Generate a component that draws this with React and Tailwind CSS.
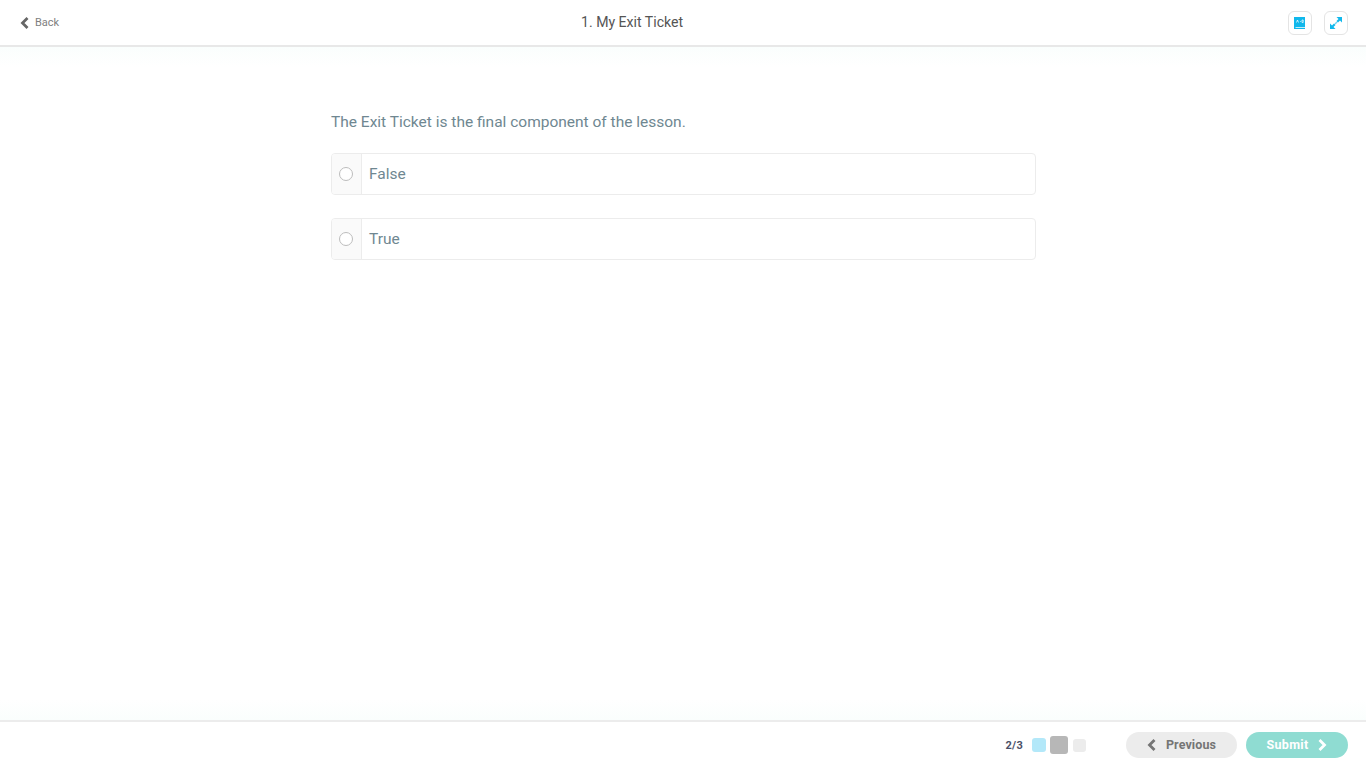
import React from 'react';

const options = ['False', 'True'];

const Chevron = ({ dir = 'left', className }) => (
  <svg width="9" height="12" viewBox="0 0 9 12" className={className} fill="none" stroke="currentColor" strokeWidth="2.8">
    <path d={dir === 'left' ? 'M7.5 1 2.500 6l5 5' : 'M1.500 1l5 5-5 5'} />
  </svg>
);

const Option = ({ label }) => (
  <label className="flex h-[42px] rounded-[4px] border border-[#ececec] bg-white cursor-pointer overflow-hidden">
    <span className="flex w-[30px] shrink-0 items-center justify-center border-r border-[#ececec] bg-[#fafafa] pr-[1px]">
      <span className="w-[14px] h-[14px] rounded-full border-[1.5px] border-[#bdbdbd] bg-white" />
    </span>
    <span className="flex items-center pl-[7px] pt-[2px] text-[15.5px] text-[#6f8791]">{label}</span>
  </label>
);

const App = () => {
  return (
    <div className="flex h-screen flex-col bg-white font-['Roboto',sans-serif]">
      {/* Header */}
      <header className="relative flex h-[47px] shrink-0 items-center justify-between border-b-2 border-[#e8e8e8] pl-[20px] pr-[18px] bg-white">
        <button className="flex items-center gap-[6px] text-[11px] text-[#808080]">
          <Chevron className="text-[#666]" />
          <span className="pt-[1px]">Back</span>
        </button>
        <h1 className="absolute left-[581px] text-[14.1px] text-[#555]">1. My Exit Ticket</h1>
        <div className="flex gap-[12px]">
          <button className="flex h-[24px] w-[24px] items-center justify-center rounded-[6px] border border-[#e4e4e4]">
            <svg width="11" height="12" viewBox="0 0 11 12" className="mr-[1px]">
              <path d="M0 0h11v10H1.500v.8H11V12H0z" fill="#10b8ec" />
              <path d="M2.500 5.500 3.500 3l1 2.500M6 4.500h.8M8 3h1.200v2.500H8z" stroke="#fff" strokeWidth=".7" fill="none" />
            </svg>
          </button>
          <button className="flex h-[24px] w-[24px] items-center justify-center rounded-[6px] border border-[#e4e4e4]">
            <svg width="12" height="12" viewBox="0 0 12 12" fill="#10b8ec">
              <path d="M6.500 0H12v5.500L10 3.500 8 5.500 6.500 4 8.500 2z" />
              <path d="M5.500 12H0V6.500L2 8.500 4 6.500 5.500 8 3.500 10z" />
              <path d="M4.500 6.500 6.500 4.500 7.500 5.500 5.500 7.500z" opacity=".6" />
            </svg>
          </button>
        </div>
      </header>

      {/* Question */}
      <main className="flex-1 bg-[linear-gradient(to_bottom,#fafefd,#ffffff_3%,#ffffff_97%,#fafefd)]">
        <div className="ml-[331px] w-[705px] pt-[64px]">
          <p className="mb-[20px] text-[15.5px] leading-[22px] text-[#6f8791]">The Exit Ticket is the final component of the lesson.</p>
          <div className="flex flex-col gap-[23px]">
            {options.map((o) => (
              <Option key={o} label={o} />
            ))}
          </div>
        </div>
      </main>

      {/* Footer */}
      <footer className="flex h-[48px] shrink-0 items-center justify-end border-t-2 border-[#ececec] bg-white pr-[18px]">
        <span className="mr-[9px] pt-[2px] text-[11px] font-bold tracking-[0.3px] text-[#4a5068]">2/3</span>
        <div className="mr-[40px] flex items-center gap-[4px]">
          <span className="h-[14px] w-[14px] rounded-[3px] bg-[#b3e8f9]" />
          <span className="h-[18px] w-[18px] rounded-[3px] bg-[#b7b7b7]" />
          <span className="ml-[1px] h-[13px] w-[13px] rounded-[3px] bg-[#ececec]" />
        </div>
        <button className="mr-[9px] flex h-[26px] w-[111px] items-center justify-center gap-[10px] rounded-full bg-[#ececec] text-[12.5px] font-bold tracking-[0.1px] text-[#757575]">
          <Chevron />
          Previous
        </button>
        <button className="flex h-[26px] w-[102px] items-center justify-center gap-[10px] rounded-full bg-[#8fdcd2] text-[12.5px] font-bold tracking-[0.3px] text-white">
          Submit
          <Chevron dir="right" />
        </button>
      </footer>
    </div>
  );
};

export default App;
